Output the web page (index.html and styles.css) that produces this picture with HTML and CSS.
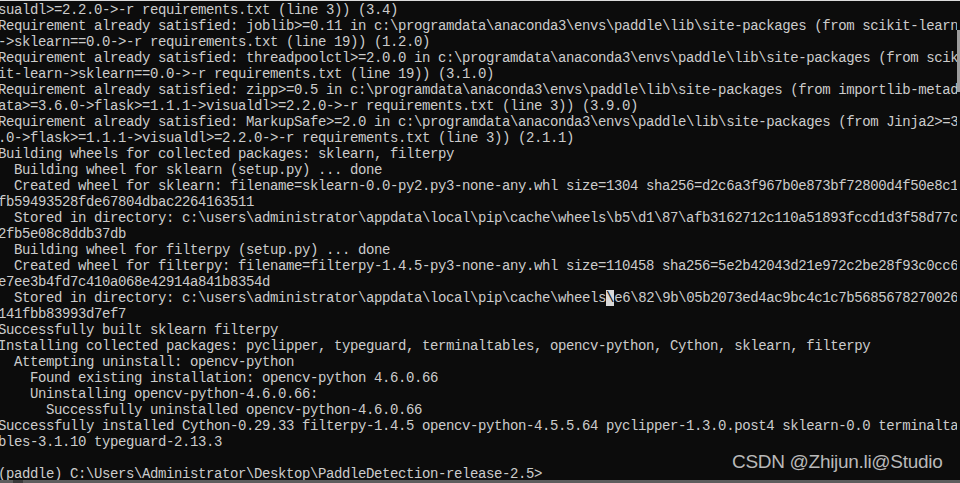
FILE: index.html
```html
<!DOCTYPE html>
<html>
<head>
<meta charset="utf-8">
<link rel="stylesheet" href="styles.css">
</head>
<body>
<div class="window">
<div class="console">
<pre class="output">sualdl&gt;=2.2.0-&gt;-r requirements.txt (line 3)) (3.4)
Requirement already satisfied: joblib&gt;=0.11 in c:\programdata\anaconda3\envs\paddle\lib\site-packages (from scikit-learn
-&gt;sklearn==0.0-&gt;-r requirements.txt (line 19)) (1.2.0)
Requirement already satisfied: threadpoolctl&gt;=2.0.0 in c:\programdata\anaconda3\envs\paddle\lib\site-packages (from scik
it-learn-&gt;sklearn==0.0-&gt;-r requirements.txt (line 19)) (3.1.0)
Requirement already satisfied: zipp&gt;=0.5 in c:\programdata\anaconda3\envs\paddle\lib\site-packages (from importlib-metad
ata&gt;=3.6.0-&gt;flask&gt;=1.1.1-&gt;visualdl&gt;=2.2.0-&gt;-r requirements.txt (line 3)) (3.9.0)
Requirement already satisfied: MarkupSafe&gt;=2.0 in c:\programdata\anaconda3\envs\paddle\lib\site-packages (from Jinja2&gt;=3
.0-&gt;flask&gt;=1.1.1-&gt;visualdl&gt;=2.2.0-&gt;-r requirements.txt (line 3)) (2.1.1)
Building wheels for collected packages: sklearn, filterpy
  Building wheel for sklearn (setup.py) ... done
  Created wheel for sklearn: filename=sklearn-0.0-py2.py3-none-any.whl size=1304 sha256=d2c6a3f967b0e873bf72800d4f50e8c1
fb59493528fde67804dbac2264163511
  Stored in directory: c:\users\administrator\appdata\local\pip\cache\wheels\b5\d1\87\afb3162712c110a51893fccd1d3f58d77c
2fb5e08c8ddb37db
  Building wheel for filterpy (setup.py) ... done
  Created wheel for filterpy: filename=filterpy-1.4.5-py3-none-any.whl size=110458 sha256=5e2b42043d21e972c2be28f93c0cc6
e7ee3b4fd7c410a068e42914a841b8354d
  Stored in directory: c:\users\administrator\appdata\local\pip\cache\wheels<span class="cursor">\</span>e6\82\9b\05b2073ed4ac9bc4c1c7b5685678270026
141fbb83993d7ef7
Successfully built sklearn filterpy
Installing collected packages: pyclipper, typeguard, terminaltables, opencv-python, Cython, sklearn, filterpy
  Attempting uninstall: opencv-python
    Found existing installation: opencv-python 4.6.0.66
    Uninstalling opencv-python-4.6.0.66:
      Successfully uninstalled opencv-python-4.6.0.66
Successfully installed Cython-0.29.33 filterpy-1.4.5 opencv-python-4.5.5.64 pyclipper-1.3.0.post4 sklearn-0.0 terminalta
bles-3.1.10 typeguard-2.13.3

(paddle) C:\Users\Administrator\Desktop\PaddleDetection-release-2.5&gt;</pre>
<div class="watermark">CSDN @Zhijun.li@Studio</div>
</div>
<div class="vscroll"><div class="vthumb"></div></div>
<div class="hscroll"><div class="hthumb"></div></div>
<div class="corner"></div>
</div>
</body>
</html>
```

FILE: styles.css
```css
html, body {
  margin: 0;
  padding: 0;
  background: #0c0c0c;
  width: 960px;
  height: 483px;
  overflow: hidden;
}

.window {
  display: grid;
  grid-template-columns: 957px 3px;
  grid-template-rows: 479px 3px;
  width: 960px;
  height: 483px;
  box-sizing: border-box;
  border-top: 1px solid #dcdcdc;
}

.console {
  position: relative;
  overflow: hidden;
  background: #0c0c0c;
}

.output {
  margin: 0 0 0 -2px;
  padding: 1px 0 0 0;
  font-family: "Liberation Mono", monospace;
  font-size: 14px;
  letter-spacing: -0.4px;
  line-height: 16px;
  color: #cccccc;
  white-space: pre;
}

.cursor {
  background: #d8d8d8;
  color: #0c0c0c;
}

.watermark {
  position: absolute;
  left: 732px;
  top: 451px;
  font-family: "Liberation Sans", Arial, sans-serif;
  font-size: 19px;
  letter-spacing: -0.3px;
  line-height: 1;
  color: #b9b9b9;
  white-space: nowrap;
}

.vscroll {
  background: #0c0c0c;
  padding-top: 29px;
}

.vthumb {
  height: 62px;
  background: #9c9c9c;
}

.hscroll {
  background: #5e5e5e;
  padding-left: 13px;
}

.hthumb {
  width: 10px;
  height: 100%;
  background: #3a3a3a;
}

.corner {
  background: #5e5e5e;
}
```
